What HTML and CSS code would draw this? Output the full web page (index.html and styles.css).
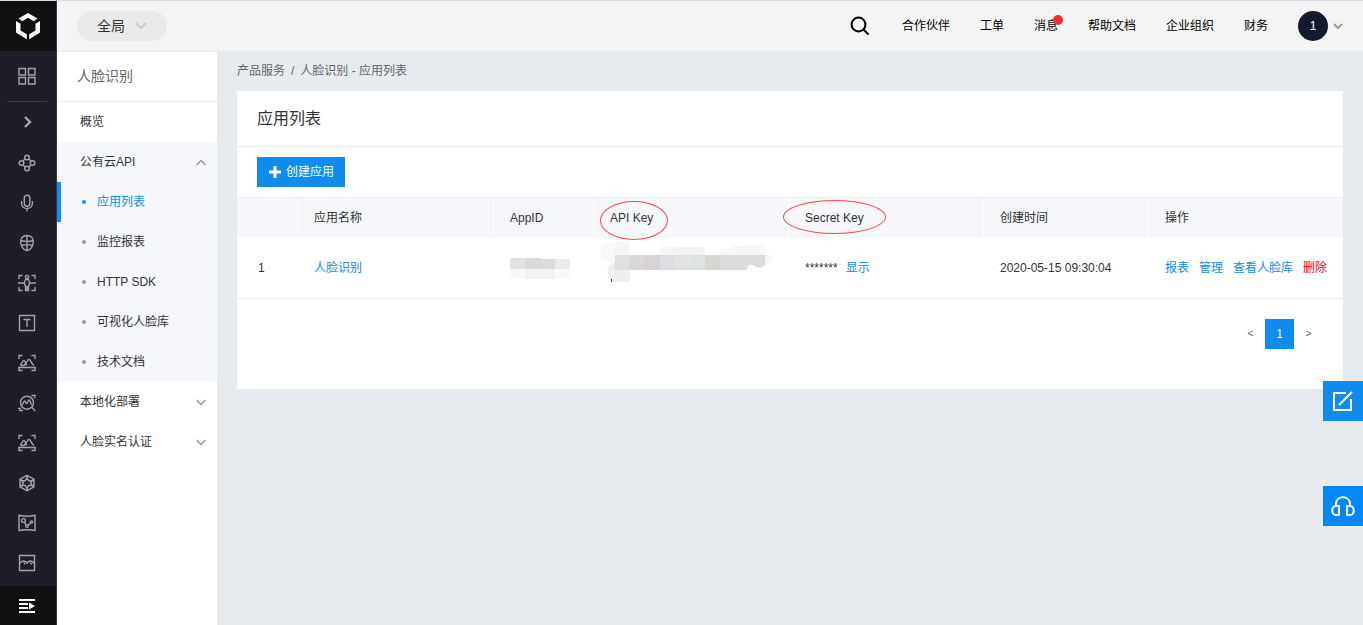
FILE: index.html
```html
<!DOCTYPE html>
<html lang="zh-CN">
<head>
    <meta charset="UTF-8">
    <meta name="viewport" content="width=device-width, initial-scale=1.0">
    <title>人脸识别 - 应用列表</title>
    <link rel="stylesheet" href="styles.css">
</head>
<body>
    <!-- 左侧产品图标栏 -->
    <nav class="rail" aria-label="产品导航">
        <a class="rail-logo" href="#" aria-label="首页">
            <svg width="26" height="28" viewBox="0 0 26 28" fill="#fff">
                <path d="M13 1l9.500 5.500-3.800 2.700L13 5.800 7.300 9.200 3.500 6.500z"/>
                <path d="M1 9l4.500 2.800v6.600l6.300 3.800v5L1 20.500z"/>
                <path d="M25 9l-4.500 2.800v6.600l-6.300 3.800v5L25 20.500z"/>
            </svg>
        </a>
        <a class="rail-grid" href="#" aria-label="全部产品">
            <svg width="18" height="18" viewBox="0 0 18 18"><path d="M1 1.500h6.500V8H1zM10.500 1.500H17V8h-6.500zM1 10.500h6.500V17H1zM10.500 10.500H17V17h-6.500z"/></svg>
        </a>
        <a class="rail-item" href="#" aria-label="展开">
            <svg width="18" height="18" viewBox="0 0 18 18"><path stroke-width="2.400" d="M7 4l5 5-5 5"/></svg>
        </a>
        <a class="rail-item" href="#" aria-label="知识图谱">
            <svg width="18" height="18" viewBox="0 0 18 18"><circle cx="9" cy="3.500" r="2.300"/><circle cx="9" cy="14.500" r="2.300"/><circle cx="3.500" cy="9" r="2.300"/><circle cx="14.500" cy="9" r="2.300"/><path d="M5 7l2-2M11 5l2 2M5 11l2 2M11 13l2-2"/></svg>
        </a>
        <a class="rail-item" href="#" aria-label="语音技术">
            <svg width="18" height="18" viewBox="0 0 18 18"><rect x="6.300" y="1.200" width="5.500" height="11" rx="2.700"/><path d="M3.600 7v2.500c0 6.500 10.800 6.500 10.800 0V7M9 14.500V17.500"/></svg>
        </a>
        <a class="rail-item" href="#" aria-label="人脸识别">
            <svg width="18" height="18" viewBox="0 0 18 18"><path d="M9 1.500c4.500 0 6.500 3 6.300 6.500-.3 5-3.300 8.500-6.300 8.500S3 13 2.700 8C2.500 4.500 4.500 1.500 9 1.500zM9 2v14M3 6.500c3 1.200 9 1.200 12 0M3.500 11.500c3-1 8-1 11 0"/></svg>
        </a>
        <a class="rail-item" href="#" aria-label="人体分析">
            <svg width="18" height="18" viewBox="0 0 18 18"><path d="M1 5V1.500h3.500M13.500 1.500H17V5M1 13v3.500h3.500M13.500 16.500H17V13M0 9h6M12 9h6M7.500 5.500C6 8 6.500 10.500 7.500 12v4.500h3V12c1-1.500 1.500-4 0-6.500zM9 12v4"/><circle cx="9" cy="3" r="1.600"/></svg>
        </a>
        <a class="rail-item" href="#" aria-label="文字识别">
            <svg width="18" height="18" viewBox="0 0 18 18"><path d="M1.500 1.500h15v15h-15zM5.500 5.500h7M9 5.500V13"/></svg>
        </a>
        <a class="rail-item" href="#" aria-label="图像识别">
            <svg width="18" height="18" viewBox="0 0 18 18"><path d="M1 5V1.500h3.500M13.500 1.500H17V5M1 13.700v2.800h3.500M13.500 16.500H17v-2.800M0 13.500h18M2 11.500c1.500-1 2-5 4-5 1.500 0 1.500 4 3 5M7.500 9c1.500 0 2-3.500 3.500-3.500 2 0 2.500 5 5 6M3 11.500h3l1.500-2"/></svg>
        </a>
        <a class="rail-item" href="#" aria-label="图像搜索">
            <svg width="18" height="18" viewBox="0 0 18 18"><circle cx="9" cy="8.700" r="6.500"/><path d="M13.500 13l3.800 4M4.200 11c1.300-1 1.300-4 2.500-4s1 2.500 2.100 2.500 1-3.500 2.400-3.500 1 3.500 2.500 5M13.500 1.500H18M16 3.500h1.500M0 14.500h3M1 16.500h4"/></svg>
        </a>
        <a class="rail-item" href="#" aria-label="图像审核">
            <svg width="18" height="18" viewBox="0 0 18 18"><path d="M1 5V1.500h3.500M13.500 1.500H17V5M1 13.700v2.800h3.500M13.500 16.500H17v-2.800M0 13.500h18M2 11.500c1.500-1 2-5 4-5 1.500 0 1.500 4 3 5M7.500 9c1.500 0 2-3.500 3.500-3.500 2 0 2.500 5 5 6M3 11.500h3l1.500-2"/></svg>
        </a>
        <a class="rail-item" href="#" aria-label="智能创作">
            <svg width="18" height="18" viewBox="0 0 18 18"><path d="M9 1.300l7 3.900v7.600l-7 3.900-7-3.900V5.200zM9 3.800l1.700 2.900h3.600L12.700 9l1.600 2.500h-3.600L9 14.300l-1.700-2.800H3.700L5.300 9 3.700 6.700h3.600zM9 1.500v2M9 14.500v2M2 5l2 1.500M16 5l-2 1.500M2 13l2-1.500M16 13l-2-1.500"/></svg>
        </a>
        <a class="rail-item" href="#" aria-label="自然语言处理">
            <svg width="18" height="18" viewBox="0 0 18 18"><path d="M1 1.300c5 1.200 11 1.200 16 0v15.200c-5-1-11-1-16 0zM6.500 8l1.500 3M10.500 11l2.500-2.500"/><circle cx="5.500" cy="6.500" r="1.900"/><circle cx="9" cy="12" r="1.400"/><circle cx="13.500" cy="8" r="1.100"/></svg>
        </a>
        <a class="rail-item" href="#" aria-label="视频技术">
            <svg width="18" height="18" viewBox="0 0 18 18"><path d="M1.500 1.500h15v15h-15zM2 9.500c1.500-3 5-3.500 7-.5 2-3 5.500-2.500 7 .5M5.500 9c1.300 0 1.500 1 1 1.500M12 9c1.300 0 1.500 1 1 1.500"/></svg>
        </a>
        <button class="rail-toggle" type="button" aria-label="收起菜单">
            <svg width="16" height="14" viewBox="0 0 16 14" fill="#fff"><path d="M0 0h16v2H0zM0 4h9v2H0zM0 8h9v2H0zM0 12h16v2H0zM10 3.500L16 7l-6 3.500z"/></svg>
        </button>
    </nav>

    <div class="page">
        <!-- 顶部导航 -->
        <header class="topbar">
            <button class="region" type="button">全局
                <svg class="arrow" width="12" height="8" viewBox="0 0 12 8"><path d="M1 1l5 5 5-5"/></svg>
            </button>
            <nav class="top-links">
                <a class="search" href="#" aria-label="搜索">
                    <svg width="20" height="20" viewBox="0 0 20 20"><circle cx="8.500" cy="8.500" r="6.900"/><path d="M13.500 13.500l5 5"/></svg>
                </a>
                <a href="#">合作伙伴</a>
                <a href="#">工单</a>
                <a class="has-dot" href="#">消息</a>
                <a href="#">帮助文档</a>
                <a href="#">企业组织</a>
                <a href="#">财务</a>
            </nav>
            <button class="account" type="button">
                <span class="avatar">1</span>
                <svg class="arrow" width="10" height="7" viewBox="0 0 10 7"><path d="M1 1l4 4 4-4"/></svg>
            </button>
        </header>

        <div class="content">
            <!-- 侧边菜单 -->
            <aside class="sidebar">
                <h2>人脸识别</h2>
                <a class="menu-item" href="#">概览</a>
                <div class="menu-group">
                    <a class="menu-item" href="#">公有云API
                        <svg class="arrow" width="10" height="7" viewBox="0 0 10 7"><path d="M.5 6L5 1.500 9.500 6"/></svg>
                    </a>
                    <a class="sub-item active" href="#">应用列表</a>
                    <a class="sub-item" href="#">监控报表</a>
                    <a class="sub-item" href="#">HTTP SDK</a>
                    <a class="sub-item" href="#">可视化人脸库</a>
                    <a class="sub-item" href="#">技术文档</a>
                </div>
                <a class="menu-item" href="#">本地化部署
                    <svg class="arrow" width="10" height="7" viewBox="0 0 10 7"><path d="M.5 1L5 5.500 9.500 1"/></svg>
                </a>
                <a class="menu-item" href="#">人脸实名认证
                    <svg class="arrow" width="10" height="7" viewBox="0 0 10 7"><path d="M.5 1L5 5.500 9.500 1"/></svg>
                </a>
            </aside>

            <main class="main">
                <div class="breadcrumb">
                    <a href="#">产品服务</a><span class="sep">/</span><span>人脸识别 - 应用列表</span>
                </div>
                <section class="card">
                    <h1>应用列表</h1>
                    <div class="toolbar">
                        <button class="create" type="button">
                            <svg width="12" height="12" viewBox="0 0 12 12"><path d="M6 0v12M0 6h12"/></svg>
                            创建应用
                        </button>
                    </div>
                    <table class="apps">
                        <colgroup>
                            <col class="col-no">
                            <col class="col-name">
                            <col class="col-id">
                            <col class="col-key">
                            <col class="col-key">
                            <col class="col-time">
                            <col>
                        </colgroup>
                        <thead>
                            <tr>
                                <th></th>
                                <th>应用名称</th>
                                <th>AppID</th>
                                <th>API Key<span class="ring ring-api"></span></th>
                                <th>Secret Key<span class="ring ring-secret"></span></th>
                                <th>创建时间</th>
                                <th>操作</th>
                            </tr>
                        </thead>
                        <tbody>
                            <tr>
                                <td>1</td>
                                <td><a href="#">人脸识别</a></td>
                                <td>
                                    <svg class="mask-id" width="60" height="21" viewBox="0 0 60 21">
                                        <path fill="#e2e2e1" d="M0 0h15v11H0z"/>
                                        <path fill="#dadadd" d="M15 0h16v11H15z"/>
                                        <path fill="#dedbda" d="M31 1h14v10H31z"/>
                                        <path fill="#e9ebed" d="M45 1h15v10H45z"/>
                                        <path fill="#f8f8f7" d="M0 11h15v9H0z"/>
                                        <path fill="#f3f3f3" d="M15 11h30v10H15z"/>
                                        <path fill="#f7f9f9" d="M45 11h15v9H45z"/>
                                    </svg>
                                </td>
                                <td>
                                    <svg class="mask-key" width="174" height="42" viewBox="0 0 174 42">
                                        <path fill="#f8f8f6" d="M5 1h10v18H5C-1 17-1 3 5 1zM120 7l15-2v8h-15z"/>
                                        <path fill="#f4f6f6" d="M15 0h15v13H15zM60 5h15v8H60zM135 4h15v9h-15z"/>
                                        <path fill="#f2f3f3" d="M75 5h30v8H75z"/>
                                        <path fill="#f7f7f8" d="M150 3h13l2 3v7h-15zM165 13h8c0 5-4 9-8 11z"/>
                                        <path fill="#dedfe1" d="M15 13h15v15H15z"/>
                                        <path fill="#d9d8d8" d="M30 13h15v15H30z"/>
                                        <path fill="#d7d3d4" d="M45 13h15v15H45z"/>
                                        <path fill="#dcdde0" d="M60 13h15v15H60z"/>
                                        <path fill="#e1e3e2" d="M75 13h15v15H75z"/>
                                        <path fill="#dee2e1" d="M90 13h15v15H90z"/>
                                        <path fill="#d7d7d1" d="M105 13h15v15h-15z"/>
                                        <path fill="#dbdddc" d="M120 13h45v10c-3 4-9 3-12 0l-4 0-3 5h-26z"/>
                                        <path fill="#efefef" d="M15 19v21c-4-1-5-4-5-6-4-3-3-9 0-11zM15 28h15v12H15z"/>
                                        <path fill="#333" d="M11 37h1v3h-1z"/>
                                    </svg>
                                </td>
                                <td><span class="secret">*******</span><a href="#">显示</a></td>
                                <td>2020-05-15 09:30:04</td>
                                <td>
                                    <div class="actions">
                                        <a href="#">报表</a>
                                        <a href="#">管理</a>
                                        <a href="#">查看人脸库</a>
                                        <a class="danger" href="#">删除</a>
                                    </div>
                                </td>
                            </tr>
                        </tbody>
                    </table>
                    <div class="pager">
                        <button type="button" aria-label="上一页">&lt;</button>
                        <button class="current" type="button">1</button>
                        <button type="button" aria-label="下一页">&gt;</button>
                    </div>
                </section>
            </main>
        </div>
    </div>

    <!-- 右侧悬浮按钮 -->
    <div class="float-tools">
        <button type="button" aria-label="反馈">
            <svg width="20" height="20" viewBox="0 0 20 20"><path d="M13 2H1v17h17V8M6 14L19 1"/></svg>
        </button>
        <button class="service" type="button" aria-label="客服">
            <svg width="24" height="20" viewBox="0 0 24 20"><path d="M5 10V8c0-9 14-9 14 0v2M8 10v9H5c-5 0-5-9 0-9zM16 10v9h3c5 0 5-9 0-9z"/></svg>
        </button>
    </div>
</body>
</html>
```

FILE: styles.css
```css
* {
    box-sizing: border-box;
}
body {
    margin: 0;
    display: flex;
    min-height: 100vh;
    background: #e7ebf0;
    color: #333;
    font-family: "Liberation Sans", "Noto Sans CJK SC", sans-serif;
    font-size: 12px;
    line-height: 20px;
}
a {
    color: #108cee;
    text-decoration: none;
}
button {
    border: none;
    padding: 0;
    background: none;
    color: inherit;
    font: inherit;
    cursor: pointer;
}
svg {
    display: block;
}
h1, h2 {
    margin: 0;
    font-weight: normal;
}
.arrow {
    fill: none;
    stroke: #999;
    stroke-width: 2;
}

/* 图标栏 */
.rail {
    position: sticky;
    top: 0;
    flex: none;
    display: flex;
    flex-direction: column;
    width: 57px;
    height: 100vh;
    overflow: hidden;
    background: #1e1e28;
    border-right: 1px solid #36364a;
    border-top: 1px solid #dcdce2;
}
.rail a, .rail-toggle {
    flex: none;
    display: flex;
    align-items: center;
    justify-content: center;
    height: 40px;
    padding-right: 2px;
}
.rail .rail-logo {
    height: 50px;
    padding: 0;
    background: #0f1011;
}
.rail .rail-grid {
    height: 51px;
    margin: 0 9px 0 7px;
    padding: 0;
    border-bottom: 1px solid #3c3c4a;
}
.rail .rail-grid + .rail-item {
    margin-bottom: 1px;
}
.rail-grid svg, .rail-item svg {
    fill: none;
    stroke: #a3a3a8;
    stroke-width: 1.4;
}
.rail .rail-toggle {
    height: 39px;
    margin-top: auto;
    background: #0f1011;
}

/* 顶部 */
.page {
    flex: 1;
    min-width: 0;
    display: flex;
    flex-direction: column;
}
.topbar {
    display: flex;
    align-items: center;
    height: 52px;
    padding: 0 20px;
    background: #f4f4f4;
    border-top: 1px solid #dcdce2;
    border-bottom: 1px solid #e7e9ec;
}
.region {
    display: flex;
    align-items: center;
    gap: 10px;
    height: 30px;
    padding: 0 20px;
    border-radius: 15px;
    background: #eaeaea;
    font-size: 14px;
}
.region .arrow {
    stroke: #ccc;
}
.top-links {
    display: flex;
    align-items: center;
    gap: 30px;
    margin-left: auto;
}
.top-links a {
    color: #000;
}
.search {
    margin-right: 2px;
}
.search svg {
    fill: none;
    stroke: #000;
    stroke-width: 2;
}
.has-dot {
    position: relative;
}
.has-dot::after {
    content: "";
    position: absolute;
    top: -1px;
    right: -5px;
    width: 10px;
    height: 10px;
    border-radius: 50%;
    background: #ee2e2e;
}
.account {
    display: flex;
    align-items: center;
    gap: 5px;
    margin-left: 30px;
}
.avatar {
    width: 30px;
    height: 30px;
    border-radius: 50%;
    background: #151b2c;
    color: #fff;
    line-height: 30px;
}

/* 侧边菜单 */
.content {
    flex: 1;
    display: flex;
}
.sidebar {
    flex: none;
    width: 160px;
    background: #fff;
}
.sidebar h2 {
    height: 50px;
    padding-left: 20px;
    border-bottom: 1px solid #e7e9ec;
    color: #666;
    font-size: 14px;
    line-height: 48px;
}
.menu-item {
    display: flex;
    align-items: center;
    justify-content: space-between;
    height: 40px;
    padding: 0 11px 0 23px;
    color: #333;
}
.menu-item .arrow {
    stroke-width: 1.5;
}
.menu-group {
    background: #f5f7fb;
}
.sub-item {
    display: flex;
    align-items: center;
    height: 40px;
    padding-left: 21px;
    border-left: 4px solid transparent;
    color: #333;
}
.sub-item::before {
    content: "";
    width: 4px;
    height: 4px;
    margin-right: 11px;
    border-radius: 50%;
    background: #999;
}
.sub-item.active {
    border-left-color: #108cee;
    color: #108cee;
}
.sub-item.active::before {
    background: #108cee;
}

/* 主区域 */
.main {
    flex: 1;
    min-width: 0;
    padding: 0 20px 20px;
}
.breadcrumb {
    height: 39px;
    line-height: 38px;
    color: #666;
}
.breadcrumb a {
    color: #666;
}
.sep {
    margin: 0 6px;
}
.card {
    padding-bottom: 40px;
    background: #fff;
}
.card h1 {
    height: 56px;
    padding-left: 20px;
    border-bottom: 1px solid #e7e9ee;
    font-size: 16px;
    line-height: 56px;
}
.toolbar {
    padding: 10px 20px;
}
.create {
    display: flex;
    align-items: center;
    gap: 5px;
    height: 30px;
    padding: 0 11px 0 12px;
    background: #108cee;
    color: #fff;
}
.create svg {
    stroke: #fff;
    stroke-width: 3;
}
.apps {
    width: 100%;
    table-layout: fixed;
    border-collapse: separate;
    border-spacing: 0;
    border-top: 1px solid #ebecf1;
}
.col-no {
    width: 61px;
}
.col-name {
    width: 196px;
}
.col-id {
    width: 100px;
}
.col-key {
    width: 195px;
}
.col-time {
    width: 165px;
}
.apps th, .apps td {
    position: relative;
    padding: 0 0 0 16px;
    text-align: left;
    white-space: nowrap;
}
.apps th {
    height: 40px;
    background: #f5f7fb;
    border-right: 1px solid #fff;
    font-weight: normal;
}
.apps th:last-child {
    border-right: none;
}
.apps td {
    height: 61px;
    border-bottom: 1px solid #ebecf5;
}
.apps td:first-child {
    padding-left: 21px;
}
.ring {
    position: absolute;
    z-index: 1;
    border: 1px solid #fb4a4a;
    border-radius: 50%;
}
.ring-api {
    top: 3px;
    left: 6px;
    width: 68px;
    height: 39px;
}
.ring-secret {
    top: 2px;
    left: -6px;
    width: 103px;
    height: 34px;
}
.mask-key {
    position: absolute;
    top: 4px;
    left: 6px;
}
.secret {
    margin-right: 8px;
}
.actions {
    display: flex;
    gap: 10px;
}
.actions .danger {
    color: #f00;
}
.pager {
    display: flex;
    justify-content: flex-end;
    padding: 20px 20px 0;
}
.pager button {
    width: 29px;
    height: 30px;
    color: #666;
    font-size: 10px;
}
.pager .current {
    background: #108cee;
    color: #fff;
    font-size: 12px;
}

/* 悬浮按钮 */
.float-tools {
    position: fixed;
    right: 0;
    bottom: 99px;
    display: flex;
    flex-direction: column;
    gap: 65px;
}
.float-tools button {
    display: flex;
    align-items: center;
    justify-content: center;
    width: 40px;
    height: 40px;
    background: #108cee;
}
.float-tools .service {
    background: #0088fb;
}
.float-tools svg {
    fill: none;
    stroke: #fff;
    stroke-width: 2;
}
```
